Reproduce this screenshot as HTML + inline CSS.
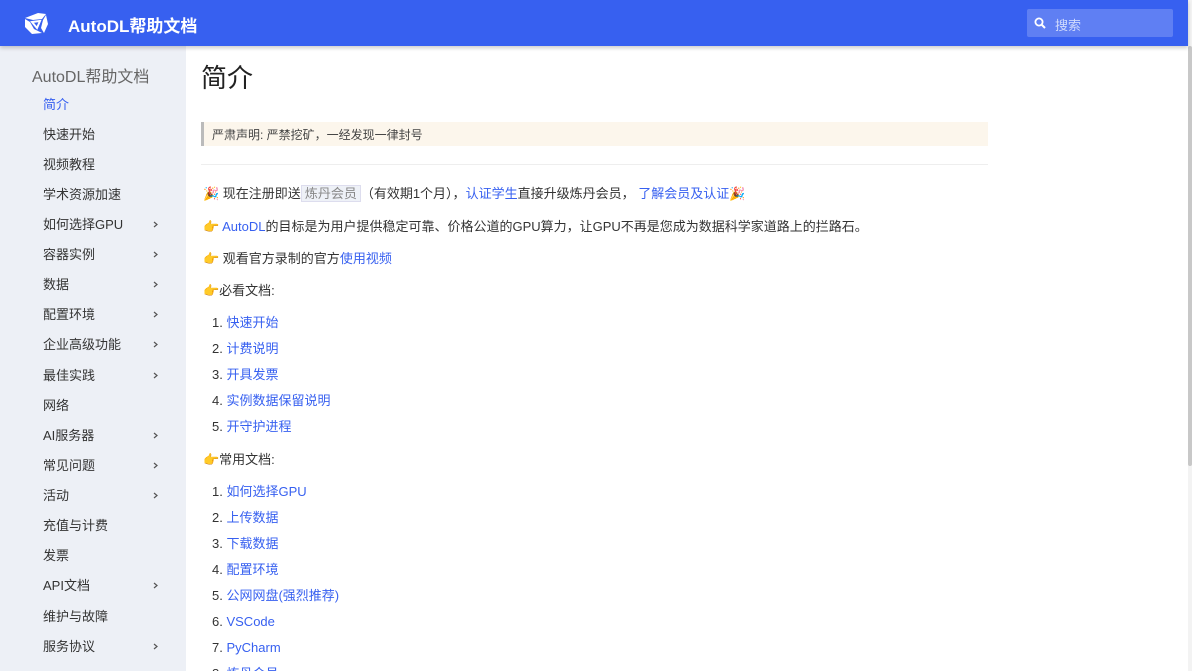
<!DOCTYPE html>
<html><head><meta charset="utf-8"><style>
*{margin:0;padding:0;box-sizing:border-box}
html,body{width:1192px;height:671px;overflow:hidden}
body{font-family:"Liberation Sans","Noto Sans CJK SC",sans-serif;background:#fff;position:relative;color:#2c3e50}
.hdr{position:absolute;left:0;top:0;width:1188px;height:46px;background:#3760f0;box-shadow:0 2px 4px rgba(0,0,0,.2);z-index:2}
.hdr .t{position:absolute;left:68px;top:12px;color:#fff;font-weight:bold;font-size:17px}
.srch{position:absolute;left:1027px;top:9px;width:146px;height:28px;background:rgba(255,255,255,.2);border-radius:2px;color:rgba(255,255,255,.7);font-size:13px;padding:6px 0 0 28px}
.srch svg{position:absolute;left:7px;top:8px}
.side{position:absolute;left:0;top:46px;width:186px;height:625px;background:#edf0f6}
.side .ttl{position:absolute;left:32px;top:17px;font-size:16px;color:#666}
.side .it{position:absolute;left:43px;font-size:13px;color:#333;width:115px;line-height:19px}
.side .it.a{color:#3760f0}
.side .it svg{position:absolute;right:0;top:6px}
.main{position:absolute;left:201px;top:0;width:787px}
h1{position:absolute;left:0;top:58px;font-size:26px;font-weight:normal;color:#222}
.warn{position:absolute;left:0;top:122px;width:787px;height:24px;background:#fcf6ec;border-left:3px solid #bbb;font-size:12px;color:#444;padding:4px 0 0 8px}
.hr{position:absolute;left:0;top:164px;width:787px;height:1px;background:#eee}
.p{position:absolute;left:2px;font-size:13px;color:#333;white-space:nowrap;line-height:19px}
a{color:#3760f0;text-decoration:none}
.code{background:#eef1f7;border:1px solid #dde;color:#888;padding:0 3px}
.li{position:absolute;left:11px;font-size:13px;color:#333;line-height:19px}
.sb{position:absolute;left:1188px;top:0;width:4px;height:671px;background:#f3f3f3}
.sb div{position:absolute;left:0;top:46px;width:4px;height:420px;background:#c8c8c8;border-radius:2px}
</style></head><body>
<div class="hdr">
<svg style="position:absolute;left:22px;top:10px" width="28" height="26" viewBox="0 0 28 26"><path d="M3 8 L16 3 L24 4 L20 9 L11 10 Z" fill="#fff"/><path d="M24 5 L26 14 L22 23 L19 18 L21 10 Z" fill="#fff"/><path d="M20 23 L10 24 L3 17 L3 9 L8 12 L12 19 Z" fill="#fff"/><path d="M10 12 L18 11 L15 18 Z" fill="none" stroke="#fff" stroke-width="2"/></svg>
<div class="t">AutoDL帮助文档</div>
<div class="srch"><svg width="12" height="12" viewBox="0 0 12 12"><circle cx="5" cy="5" r="3.6" fill="none" stroke="#fff" stroke-width="1.8"/><path d="M7.5 7.5L11 11" stroke="#fff" stroke-width="2"/></svg>搜索</div>
</div>
<div class="side">
<div class="ttl">AutoDL帮助文档</div>
<div class="it a" style="top:49px">简介</div>
<div class="it" style="top:79px">快速开始</div>
<div class="it" style="top:109px">视频教程</div>
<div class="it" style="top:139px">学术资源加速</div>
<div class="it" style="top:169px">如何选择GPU<svg width="5" height="7" viewBox="0 0 5 7"><path d="M1 1L4 3.5L1 6" fill="none" stroke="#555" stroke-width="1.2"/></svg></div>
<div class="it" style="top:199px">容器实例<svg width="5" height="7" viewBox="0 0 5 7"><path d="M1 1L4 3.5L1 6" fill="none" stroke="#555" stroke-width="1.2"/></svg></div>
<div class="it" style="top:229px">数据<svg width="5" height="7" viewBox="0 0 5 7"><path d="M1 1L4 3.5L1 6" fill="none" stroke="#555" stroke-width="1.2"/></svg></div>
<div class="it" style="top:259px">配置环境<svg width="5" height="7" viewBox="0 0 5 7"><path d="M1 1L4 3.5L1 6" fill="none" stroke="#555" stroke-width="1.2"/></svg></div>
<div class="it" style="top:289px">企业高级功能<svg width="5" height="7" viewBox="0 0 5 7"><path d="M1 1L4 3.5L1 6" fill="none" stroke="#555" stroke-width="1.2"/></svg></div>
<div class="it" style="top:320px">最佳实践<svg width="5" height="7" viewBox="0 0 5 7"><path d="M1 1L4 3.5L1 6" fill="none" stroke="#555" stroke-width="1.2"/></svg></div>
<div class="it" style="top:350px">网络</div>
<div class="it" style="top:380px">AI服务器<svg width="5" height="7" viewBox="0 0 5 7"><path d="M1 1L4 3.5L1 6" fill="none" stroke="#555" stroke-width="1.2"/></svg></div>
<div class="it" style="top:410px">常见问题<svg width="5" height="7" viewBox="0 0 5 7"><path d="M1 1L4 3.5L1 6" fill="none" stroke="#555" stroke-width="1.2"/></svg></div>
<div class="it" style="top:440px">活动<svg width="5" height="7" viewBox="0 0 5 7"><path d="M1 1L4 3.5L1 6" fill="none" stroke="#555" stroke-width="1.2"/></svg></div>
<div class="it" style="top:470px">充值与计费</div>
<div class="it" style="top:500px">发票</div>
<div class="it" style="top:530px">API文档<svg width="5" height="7" viewBox="0 0 5 7"><path d="M1 1L4 3.5L1 6" fill="none" stroke="#555" stroke-width="1.2"/></svg></div>
<div class="it" style="top:561px">维护与故障</div>
<div class="it" style="top:591px">服务协议<svg width="5" height="7" viewBox="0 0 5 7"><path d="M1 1L4 3.5L1 6" fill="none" stroke="#555" stroke-width="1.2"/></svg></div>
</div>
<div class="main">
<h1>简介</h1>
<div class="warn">严肃声明: 严禁挖矿，一经发现一律封号</div>
<div class="hr"></div>
<div class="p" style="top:184px">🎉 现在注册即送<span class="code">炼丹会员</span>（有效期1个月），<a>认证学生</a>直接升级炼丹会员， <a>了解会员及认证</a>🎉</div>
<div class="p" style="top:217px">👉 <a>AutoDL</a>的目标是为用户提供稳定可靠、价格公道的GPU算力，让GPU不再是您成为数据科学家道路上的拦路石。</div>
<div class="p" style="top:249px">👉 观看官方录制的官方<a>使用视频</a></div>
<div class="p" style="top:281px">👉必看文档:</div>
<div class="li" style="top:313px">1. <a>快速开始</a></div>
<div class="li" style="top:339px">2. <a>计费说明</a></div>
<div class="li" style="top:365px">3. <a>开具发票</a></div>
<div class="li" style="top:391px">4. <a>实例数据保留说明</a></div>
<div class="li" style="top:417px">5. <a>开守护进程</a></div>
<div class="p" style="top:450px">👉常用文档:</div>
<div class="li" style="top:482px">1. <a>如何选择GPU</a></div>
<div class="li" style="top:508px">2. <a>上传数据</a></div>
<div class="li" style="top:534px">3. <a>下载数据</a></div>
<div class="li" style="top:560px">4. <a>配置环境</a></div>
<div class="li" style="top:586px">5. <a>公网网盘(强烈推荐)</a></div>
<div class="li" style="top:612px">6. <a>VSCode</a></div>
<div class="li" style="top:638px">7. <a>PyCharm</a></div>
<div class="li" style="top:664px">8. <a>炼丹会员</a></div>
</div>
<div class="sb"><div></div></div>
</body></html>
